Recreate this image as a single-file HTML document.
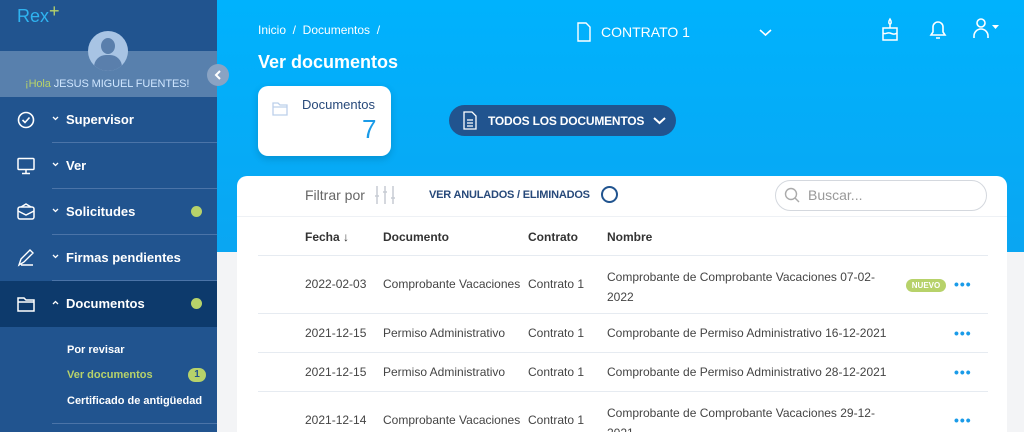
<!DOCTYPE html>
<html style="width:1024px;height:432px;overflow:hidden"><head><meta charset="utf-8"><style>
*{box-sizing:border-box;margin:0;padding:0}
body{width:1024px;height:432px;overflow:hidden;font-family:"Liberation Sans",sans-serif;background:#f3f4f6;position:relative}
.sb{position:absolute;left:0;top:0;width:217px;height:432px;background:#21548f;color:#fff}
.hdr{position:absolute;left:217px;top:0;width:807px;height:252px;background:linear-gradient(180deg,#00b2fd 0%,#0aa6f2 100%)}
.abs{position:absolute}
.menu{position:absolute;left:0;width:217px;height:46px;font-size:13px;font-weight:bold}
.menu .t{position:absolute;left:66px;top:15px}
.menu .c{position:absolute;left:52px;top:19px}
.menu .ln{position:absolute;left:52px;right:0;bottom:0;height:1px;background:#4b74a8}
.dot{position:absolute;left:191px;top:17px;width:11px;height:11px;border-radius:50%;background:#b7d26a}
.row{position:absolute;left:258px;width:730px;font-size:12px;color:#444;border-bottom:1px solid #e6ebf1}
.row span{position:absolute}
.more{color:#1a9be8;font-weight:bold;font-size:14px;letter-spacing:1px}
</style></head><body>
<div class="sb">
 <div class="abs" style="left:17px;top:6px;font-size:18px;color:#2fb3f0">Rex<span style="color:#b7d26a;font-size:18px;position:relative;top:-5px">+</span></div>
 <div class="abs" style="left:0;top:51px;width:217px;height:46px;background:#5880ad"></div>
 <div class="abs" style="left:88px;top:31px;width:40px;height:40px;border-radius:50%;background:#a8c4e4;overflow:hidden">
  <div class="abs" style="left:13px;top:7px;width:14px;height:16px;border-radius:50%;background:#5a7fac"></div>
  <div class="abs" style="left:6px;top:24px;width:28px;height:20px;border-radius:12px 12px 0 0;background:#5a7fac"></div>
 </div>
 <div class="abs" style="left:25px;top:78px;font-size:11px;color:#cfe6ff;letter-spacing:-0.1px"><span style="color:#b7d26a">¡Hola</span> JESUS MIGUEL FUENTES!</div>
 <div class="menu" style="top:97px"><svg class="abs" style="left:17px;top:14px" width="18" height="18" viewBox="0 0 18 18"><circle cx="9" cy="9" r="7.5" fill="none" stroke="#fff" stroke-width="1.6"/><path d="M5.5 9l2.5 2.5 4.5-5" fill="none" stroke="#fff" stroke-width="1.6"/></svg><svg class="c" width="7" height="5"><path d="M1 1l2.5 2.5L6 1" fill="none" stroke="#fff" stroke-width="1.3"/></svg><span class="t">Supervisor</span><div class="ln"></div></div>
 <div class="menu" style="top:143px"><svg class="abs" style="left:17px;top:14px" width="18" height="18" viewBox="0 0 18 18"><rect x="1" y="1.5" width="16" height="11" rx="1" fill="none" stroke="#fff" stroke-width="1.5"/><path d="M9 12.5v4M5 16.5h8" stroke="#fff" stroke-width="1.5"/></svg><svg class="c" width="7" height="5"><path d="M1 1l2.5 2.5L6 1" fill="none" stroke="#fff" stroke-width="1.3"/></svg><span class="t">Ver</span><div class="ln"></div></div>
 <div class="menu" style="top:189px"><svg class="abs" style="left:17px;top:14px" width="18" height="18" viewBox="0 0 18 18"><rect x="1" y="4" width="16" height="12" rx="2" fill="none" stroke="#fff" stroke-width="1.5"/><path d="M1 8l8 4 8-4M4 4l5-3 5 3" fill="none" stroke="#fff" stroke-width="1.5"/></svg><svg class="c" width="7" height="5"><path d="M1 1l2.5 2.5L6 1" fill="none" stroke="#fff" stroke-width="1.3"/></svg><span class="t">Solicitudes</span><div class="dot"></div><div class="ln"></div></div>
 <div class="menu" style="top:235px"><svg class="abs" style="left:17px;top:14px" width="18" height="18" viewBox="0 0 18 18"><path d="M2 16l2-6 9-9 3 3-9 9zM4 16h12" fill="none" stroke="#fff" stroke-width="1.4"/></svg><svg class="c" width="7" height="5"><path d="M1 1l2.5 2.5L6 1" fill="none" stroke="#fff" stroke-width="1.3"/></svg><span class="t">Firmas pendientes</span><div class="ln"></div></div>
 <div class="menu" style="top:281px;background:#0d3a6c"><svg class="abs" style="left:17px;top:14px" width="18" height="18" viewBox="0 0 18 18"><path d="M1 3h6l2 2h8v11H1z M1 7h16" fill="none" stroke="#fff" stroke-width="1.5"/></svg><svg class="c" width="7" height="5"><path d="M1 4l2.5-2.5L6 4" fill="none" stroke="#fff" stroke-width="1.3"/></svg><span class="t">Documentos</span><div class="dot"></div></div>
 <div class="abs" style="left:67px;top:344px;font-size:11px;font-weight:bold">Por revisar</div>
 <div class="abs" style="left:67px;top:369px;font-size:11px;font-weight:bold;color:#b7d26a">Ver documentos</div>
 <div class="abs" style="left:188px;top:368px;width:18px;height:14px;border-radius:7px;background:#b7d26a;color:#21548f;font-size:10px;text-align:center;line-height:14px;font-weight:bold">1</div>
 <div class="abs" style="left:67px;top:395px;font-size:11px;font-weight:bold">Certificado de antigüedad</div>
 <div class="abs" style="left:52px;top:423px;width:165px;height:1px;background:#4b74a8"></div>
</div>
<div class="abs" style="left:207px;top:64px;width:22px;height:22px;border-radius:50%;background:#8aa3c3;z-index:3"><svg class="abs" style="left:7px;top:6px" width="8" height="10"><path d="M6 1L2 5l4 4" fill="none" stroke="#fff" stroke-width="2"/></svg></div>
<div class="hdr"></div>
<div class="abs" style="left:258px;top:23px;font-size:12px;color:#fff">Inicio &nbsp;/ &nbsp;Documentos &nbsp;/</div>
<svg class="abs" style="left:576px;top:22px" width="16" height="20" viewBox="0 0 16 20"><path d="M2 1h8l4 4v14H2z" fill="none" stroke="#fff" stroke-width="1.4"/></svg>
<div class="abs" style="left:601px;top:24px;font-size:14px;color:#fff">CONTRATO 1</div>
<svg class="abs" style="left:759px;top:28px" width="13" height="9"><path d="M1 2l5.5 5 5.5-5" fill="none" stroke="#fff" stroke-width="1.6"/></svg>
<svg class="abs" style="left:880px;top:17px" width="20" height="26" viewBox="0 0 20 26"><path d="M10 2c2 3 1 5 0 5s-2-2 0-5zM10 7v4M3 11h14v12H3zM3 16c2 2 4-1 7 0s4 2 7 0" fill="none" stroke="#fff" stroke-width="1.5"/></svg>
<svg class="abs" style="left:928px;top:18px" width="20" height="24" viewBox="0 0 20 24"><path d="M3 17h14l-2-3V9a5 5 0 0 0-10 0v5zM8 20h4" fill="none" stroke="#fff" stroke-width="1.6"/></svg>
<svg class="abs" style="left:972px;top:18px" width="30" height="22" viewBox="0 0 30 22"><circle cx="9" cy="5" r="4" fill="none" stroke="#fff" stroke-width="1.6"/><path d="M2 20v-2a7 7 0 0 1 14 0v2" fill="none" stroke="#fff" stroke-width="1.6"/><path d="M20 7h7l-3.5 4z" fill="#fff"/></svg>
<div class="abs" style="left:258px;top:52px;font-size:18px;font-weight:bold;color:#fff">Ver documentos</div>
<div class="abs" style="left:258px;top:86px;width:133px;height:70px;background:#fff;border-radius:10px;box-shadow:0 3px 8px rgba(0,0,0,.15)"></div>
<svg class="abs" style="left:272px;top:102px" width="16" height="14" viewBox="0 0 16 14"><path d="M1 1h5l2 2h7v10H1zM1 5h14" fill="none" stroke="#bcd0ea" stroke-width="1.3"/></svg>
<div class="abs" style="left:302px;top:97px;font-size:13px;color:#27497a">Documentos</div>
<div class="abs" style="left:362px;top:114px;font-size:26px;color:#1a9be8">7</div>
<div class="abs" style="left:449px;top:105px;width:227px;height:31px;border-radius:16px;background:#21548f"></div>
<svg class="abs" style="left:463px;top:111px" width="14" height="19" viewBox="0 0 14 19"><path d="M1 1h8l4 4v13H1zM4 9h6M4 12h6M4 15h6" fill="none" stroke="#fff" stroke-width="1.3"/></svg>
<div class="abs" style="left:488px;top:114px;font-size:12px;font-weight:bold;color:#fff;letter-spacing:-0.2px">TODOS LOS DOCUMENTOS</div>
<svg class="abs" style="left:653px;top:116px" width="13" height="9"><path d="M1 2l5.5 5 5.5-5" fill="none" stroke="#fff" stroke-width="2"/></svg>
<div class="abs" style="left:237px;top:176px;width:770px;height:256px;background:#fff;border-radius:10px 10px 0 0"></div>
<div class="abs" style="left:305px;top:187px;font-size:14px;color:#666">Filtrar por</div>
<svg class="abs" style="left:374px;top:185px" width="22" height="20" viewBox="0 0 22 20"><path d="M3 1v18M11 1v18M19 1v18M1 11h4M9 7h4M17 13h4" stroke="#c7ccd3" stroke-width="1.5"/></svg>
<div class="abs" style="left:429px;top:189px;font-size:11px;font-weight:bold;color:#27497a;letter-spacing:-0.2px">VER ANULADOS / ELIMINADOS</div>
<div class="abs" style="left:601px;top:186px;width:17px;height:17px;border-radius:50%;border:2px solid #21548f"></div>
<div class="abs" style="left:775px;top:180px;width:212px;height:31px;border-radius:16px;border:1px solid #d4d8de"></div>
<svg class="abs" style="left:784px;top:187px" width="16" height="16"><circle cx="7" cy="7" r="5.5" fill="none" stroke="#aaa" stroke-width="1.4"/><path d="M11 11l4 4" stroke="#aaa" stroke-width="1.4"/></svg>
<div class="abs" style="left:808px;top:187px;font-size:14px;color:#999">Buscar...</div>
<div class="abs" style="left:237px;top:216px;width:770px;height:1px;background:#eef1f5"></div>
<div class="row" style="top:222px;height:34px;font-weight:bold;color:#333"><span style="left:47px;top:8px">Fecha ↓</span><span style="left:125px;top:8px">Documento</span><span style="left:270px;top:8px">Contrato</span><span style="left:349px;top:8px">Nombre</span></div>
<div class="row" style="top:256px;height:58px"><span style="left:47px;top:21px">2022-02-03</span><span style="left:125px;top:21px">Comprobante Vacaciones</span><span style="left:270px;top:21px">Contrato 1</span><span style="left:349px;top:11px;line-height:20px">Comprobante de Comprobante Vacaciones 07-02-<br>2022</span><span style="left:648px;top:23px;width:40px;height:13px;border-radius:7px;background:#b7d26a;color:#fff;font-size:8px;text-align:center;line-height:13px;font-weight:bold">NUEVO</span><span class="more" style="left:696px;top:20px">•••</span></div>
<div class="row" style="top:314px;height:39px"><span style="left:47px;top:12px">2021-12-15</span><span style="left:125px;top:12px">Permiso Administrativo</span><span style="left:270px;top:12px">Contrato 1</span><span style="left:349px;top:12px">Comprobante de Permiso Administrativo 16-12-2021</span><span class="more" style="left:696px;top:11px">•••</span></div>
<div class="row" style="top:353px;height:39px"><span style="left:47px;top:12px">2021-12-15</span><span style="left:125px;top:12px">Permiso Administrativo</span><span style="left:270px;top:12px">Contrato 1</span><span style="left:349px;top:12px">Comprobante de Permiso Administrativo 28-12-2021</span><span class="more" style="left:696px;top:11px">•••</span></div>
<div class="row" style="top:392px;height:40px;border:0"><span style="left:47px;top:21px">2021-12-14</span><span style="left:125px;top:21px">Comprobante Vacaciones</span><span style="left:270px;top:21px">Contrato 1</span><span style="left:349px;top:11px;line-height:20px">Comprobante de Comprobante Vacaciones 29-12-<br>2021</span><span class="more" style="left:696px;top:20px">•••</span></div>
</body></html>
